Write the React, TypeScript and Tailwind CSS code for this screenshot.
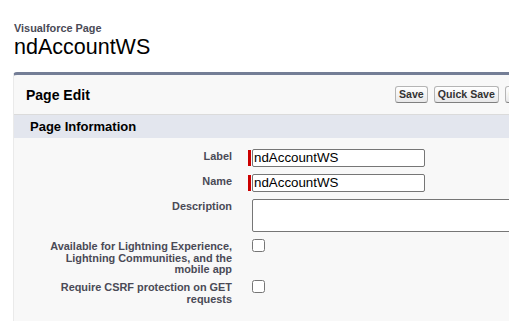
import type { ReactNode } from 'react'

const font = { fontFamily: '"Liberation Sans", Arial, sans-serif' }

function SfButton({ children }: { children: ReactNode }) {
  return (
    <button className="shrink-0 rounded-[3px] border border-[#b5b5b5] border-b-[#7f7f7f] bg-gradient-to-b from-white to-[#e8e8e9] px-[3px] py-[1px] text-[10.6px] leading-[13px] font-bold text-[#333]">
      {children}
    </button>
  )
}

function Row({ label, children, space = 7 }: { label: ReactNode; children: ReactNode; space?: number }) {
  return (
    <div className="grid grid-cols-[218px_1fr] gap-x-[20px] items-start" style={{ marginTop: space }}>
      <div className="pl-[26px] pt-[2px] text-right text-[10.9px] leading-[11.7px] font-bold text-[#4a4a56]">
        {label}
      </div>
      <div className="flex items-start">{children}</div>
    </div>
  )
}

function RequiredInput({ value }: { value: string }) {
  return (
    <div className="relative">
      <div className="absolute -left-[4px] top-[1px] bottom-[1px] w-[3px] bg-[#c00]" />
      <input
        readOnly
        value={value}
        className="block h-[18px] w-[173px] rounded-[2px] border border-[#767676] bg-white px-[1px] text-[13.33px] text-black outline-none"
      />
    </div>
  )
}

export default function App() {
  return (
    <div className="h-[321px] w-[509px] overflow-hidden bg-white" style={font}>
      <div className="pl-[14px] pt-[22px]">
        <div className="text-[10.9px] leading-[13px] font-bold text-[#4a4a56]">Visualforce Page</div>
        <h1 className="text-[21.5px] leading-[24px] text-black">ndAccountWS</h1>
      </div>

      {/* page block */}
      <div className="ml-[13px] mt-[13px] w-[600px] rounded-t-[4px] border-t-[3px] border-l border-t-[#747e96] border-l-[#eaeaea] bg-[#f8f8f8]">
        <div className="flex h-[40px] items-center border-b border-[#dbdbdb]">
          <h2 className="w-[381px] shrink-0 pl-[12px] pt-[1px] text-[14px] font-bold text-black">Page Edit</h2>
          <div className="flex gap-[6px]">
            <SfButton>Save</SfButton>
            <SfButton>Quick Save</SfButton>
            <SfButton>Cancel</SfButton>
          </div>
        </div>

        <div className="flex h-[23px] items-center bg-[#e3e6ee] pl-[16px]">
          <h3 className="text-[13px] font-bold text-black">Page Information</h3>
        </div>

        <div className="flex flex-col pt-[4px] pb-[40px]">
          <Row label="Label">
            <RequiredInput value="ndAccountWS" />
          </Row>
          <Row label="Name">
            <RequiredInput value="ndAccountWS" />
          </Row>
          <Row label="Description">
            <textarea
              readOnly
              className="block h-[33px] w-[320px] resize-none rounded-[2px] border border-[#767676] bg-white outline-none"
            />
          </Row>
          <Row label="Available for Lightning Experience, Lightning Communities, and the mobile app">
            <input type="checkbox" className="m-0 h-[13px] w-[13px]" />
          </Row>
          <Row label="Require CSRF protection on GET requests" space={4}>
            <input type="checkbox" className="m-0 h-[13px] w-[13px]" />
          </Row>
        </div>
      </div>
    </div>
  )
}
